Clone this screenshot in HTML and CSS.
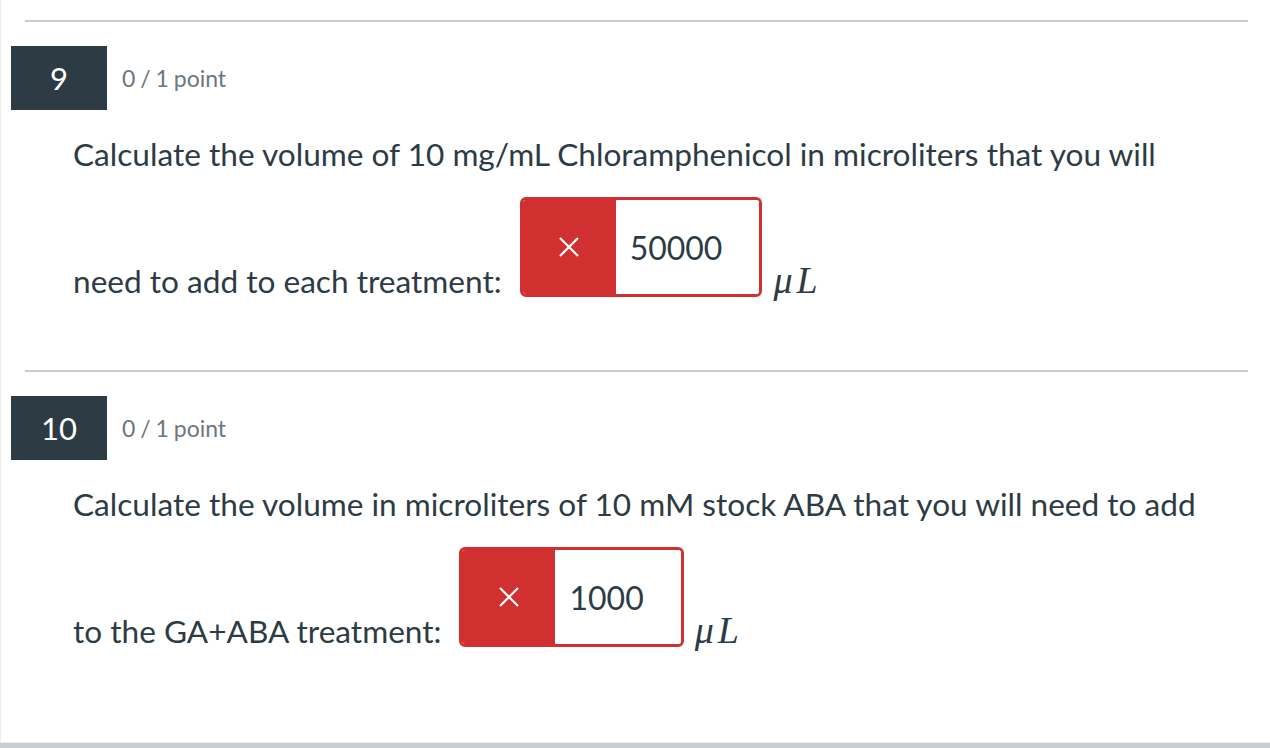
FILE: index.html
```html
<!DOCTYPE html>
<html>
<head>
<meta charset="utf-8">
<link rel="stylesheet" href="styles.css">
</head>
<body>
<div class="page">
  <div class="panel">
    <section class="question">
      <hr class="divider">
      <div class="q-header">
        <div class="badge">9</div>
        <div class="points">0 / 1 point</div>
      </div>
      <div class="q-body">
        <div class="line">Calculate the volume of 10 mg/mL Chloramphenicol in microliters that you will</div>
        <div class="answer-row">
          <span class="label">need to add to each treatment:</span>
          <span class="answer">
            <span class="mark"><svg width="22" height="22" viewBox="0 0 22 22"><path d="M2 2 L20 20 M20 2 L2 20" stroke="#fff" stroke-width="2.2" fill="none"/></svg></span>
            <span class="value">50000</span>
          </span>
          <span class="unit">μL</span>
        </div>
      </div>
    </section>
    <section class="question">
      <hr class="divider">
      <div class="q-header">
        <div class="badge">10</div>
        <div class="points">0 / 1 point</div>
      </div>
      <div class="q-body">
        <div class="line">Calculate the volume in microliters of 10 mM stock ABA that you will need to add</div>
        <div class="answer-row">
          <span class="label">to the GA+ABA treatment:</span>
          <span class="answer">
            <span class="mark"><svg width="22" height="22" viewBox="0 0 22 22"><path d="M2 2 L20 20 M20 2 L2 20" stroke="#fff" stroke-width="2.2" fill="none"/></svg></span>
            <span class="value">1000</span>
          </span>
          <span class="unit">μL</span>
        </div>
      </div>
    </section>
  </div>
  <div class="footer-band"></div>
</div>
</body>
</html>
```

FILE: styles.css
```css
* { box-sizing: border-box; }
html, body { margin: 0; padding: 0; background: #fff; }
body {
  font-family: Lato, "Noto Sans", sans-serif;
  color: #2d3b45;
}
.page {
  width: 1270px;
  height: 748px;
  display: flex;
  flex-direction: column;
  overflow: hidden;
}
.panel {
  flex: 1;
  border-left: 1px solid #ececec;
  border-bottom: 1px solid #ececec;
  padding-top: 20px;
}
.divider {
  margin: 0 22px 0 24px;
  border: 0;
  border-top: 2px solid #c7cdd1;
  height: 0;
}
.q-header {
  display: flex;
  align-items: center;
  margin-top: 24px;
  padding-left: 10px;
}
.badge {
  width: 96px;
  height: 64px;
  background: #2d3b45;
  color: #fff;
  font-size: 31px;
  display: flex;
  align-items: center;
  justify-content: center;
}
.points {
  margin-left: 15px;
  font-size: 23px;
  color: #6b7780;
  word-spacing: -1px;
}
.q-body {
  padding-left: 72px;
}
.line {
  font-size: 31.6px;
  line-height: 40px;
  margin-top: 24px;
}
.answer-row {
  display: flex;
  align-items: flex-end;
  margin-top: 23px;
  margin-bottom: 73px;
}
.label {
  font-size: 31.6px;
  line-height: 32px;
  margin-right: 18px;
}
.answer {
  display: flex;
  height: 100px;
  border: 3px solid #d0302f;
  border-radius: 6px;
  overflow: hidden;
}
.mark {
  width: 93px;
  background: #d0302f;
  display: flex;
  align-items: center;
  justify-content: center;
}
.mark svg { display: block; }
.value {
  background: #fff;
  font-size: 32px;
  display: flex;
  align-items: center;
  padding: 0 37px 0 14px;
  color: #2d3b45;
}
.unit {
  font-family: "Liberation Serif", "Times New Roman", serif;
  font-style: italic;
  font-size: 38px;
  line-height: 38px;
  letter-spacing: 4px;
  margin-left: 11px;
  margin-bottom: -2px;
}
.footer-band {
  height: 5px;
  background: #c7cdd1;
}
```
